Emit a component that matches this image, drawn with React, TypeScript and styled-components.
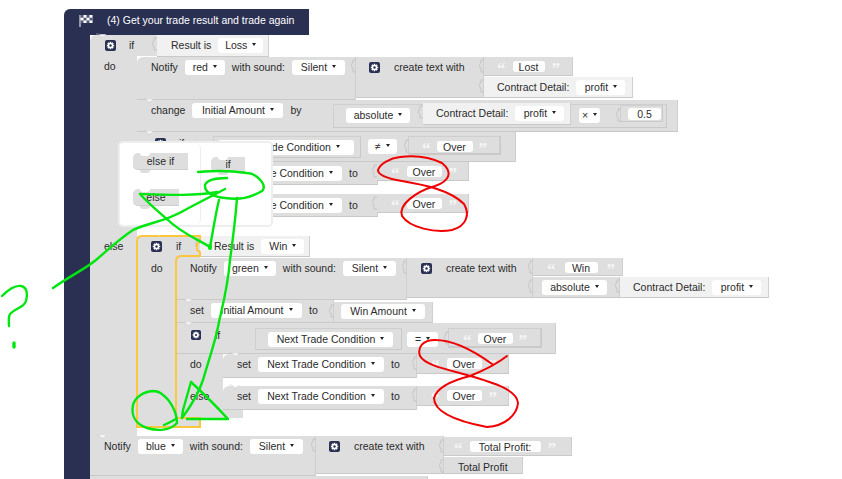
import React from 'react'
import styled, { createGlobalStyle } from 'styled-components'

const GlobalStyle = createGlobalStyle`
  html, body {
    margin: 0;
    padding: 0;
    background: #fff;
    overflow: hidden;
  }
`

const Workspace = styled.div`
  position: relative;
  width: 842px;
  height: 479px;
  overflow: hidden;
  background: #fff;
  font-family: 'Liberation Sans', Arial, sans-serif;
  font-size: 10.5px;
  color: #2b2b2b;
`

type Tone = 'grey' | 'light' | 'navy'

interface BlockProps {
  $x: number
  $y: number
  $w: number
  $h: number
  $tone?: Tone
  $pad?: number
  $top?: number
  $round?: boolean
  $flat?: boolean
}

const toneColors: Record<Tone, string> = { grey: '#dedede', light: '#f1f1f1', navy: '#2a3052' }

const Block = styled.div<BlockProps>`
  position: absolute;
  left: ${(p) => p.$x}px;
  top: ${(p) => p.$y}px;
  width: ${(p) => p.$w}px;
  height: ${(p) => p.$h}px;
  box-sizing: border-box;
  padding: ${(p) => p.$top ?? 3}px 0 0 ${(p) => p.$pad ?? 14}px;
  background: ${(p) => toneColors[p.$tone ?? 'grey']};
  border-bottom: ${(p) => (p.$flat || p.$tone === 'navy' ? 'none' : '1px solid #c9c9c9')};
  border-right: ${(p) => (p.$flat || p.$tone === 'navy' ? 'none' : '1px solid #cfcfcf')};
  border-top-left-radius: ${(p) => (p.$round ? 6 : 0)}px;
  display: flex;
  align-items: flex-start;
`

const Row = styled.div<{ $gap?: number; $h?: number }>`
  display: flex;
  align-items: center;
  height: ${(p) => p.$h ?? 15}px;
  gap: ${(p) => p.$gap ?? 7}px;
  white-space: nowrap;
`

const Label = styled.span<{ $color?: string }>`
  display: inline-block;
  margin-bottom: 2px;
  color: ${(p) => p.$color ?? 'inherit'};
`

const Field = styled.span<{ $w: number; $h?: number }>`
  display: inline-flex;
  align-items: center;
  justify-content: center;
  gap: 5px;
  box-sizing: border-box;
  width: ${(p) => p.$w}px;
  height: ${(p) => p.$h ?? 15}px;
  padding-bottom: ${(p) => (p.$h ? 0 : 2)}px;
  flex: none;
  background: #fff;
  border-radius: 3px;
  font-size: 10.5px;
`

const Caret = styled.span`
  width: 0;
  height: 0;
  border-left: 2.5px solid transparent;
  border-right: 2.5px solid transparent;
  border-top: 3px solid #222;
`

const Quote = styled.span`
  font-family: 'Liberation Serif', serif;
  font-size: 17px;
  line-height: 15px;
  height: 11px;
  color: #f6f6f6;
  font-weight: bold;
`

const TabMark = styled.svg`
  position: absolute;
  left: -5px;
  top: 3px;
  overflow: visible;
`

const Notch = styled.svg`
  position: absolute;
  left: 6px;
  top: -1px;
  overflow: visible;
`

const Frame = styled.div<{ $x: number; $y: number; $w: number; $h: number }>`
  position: absolute;
  left: ${(p) => p.$x}px;
  top: ${(p) => p.$y}px;
  width: ${(p) => p.$w}px;
  height: ${(p) => p.$h}px;
  box-sizing: border-box;
  border: 1px solid #c9c9c9;
  border-left-color: #cfcfcf;
  border-top-color: #cfcfcf;
`

const Popup = styled.div`
  position: absolute;
  left: 118px;
  top: 141px;
  width: 155px;
  height: 86px;
  box-sizing: border-box;
  display: grid;
  grid-template-columns: 81px 1fr;
  background: #fff;
  border: 2px solid #eeeeee;
  border-radius: 5px;
`

const PopupTail = styled.svg`
  position: absolute;
  left: 155px;
  top: 225px;
`

const Flyout = styled.div`
  border-right: 1px solid #eeeeee;
  border-radius: 0 6px 6px 0;
  padding: 10px 0 0 13px;
  display: flex;
  flex-direction: column;
  align-items: flex-start;
  gap: 19px;
`

const Palette = styled.div`
  padding: 14px 0 0 10px;
`

const MiniBlock = styled.div<{ $w: number; $h: number }>`
  position: relative;
  width: ${(p) => p.$w}px;
  height: ${(p) => p.$h}px;
  box-sizing: border-box;
  background: #dedede;
  border-bottom: 1px solid #cfcfcf;
  border-radius: 5px 0 0 5px;
  display: flex;
  align-items: center;
  justify-content: center;
  font-size: 10.5px;

  &::before {
    content: '';
    position: absolute;
    left: 7px;
    top: 0;
    width: 10px;
    height: 3px;
    background: #fff;
    border-radius: 0 0 4px 4px;
  }

  &::after {
    content: '';
    position: absolute;
    left: 7px;
    bottom: -4px;
    width: 10px;
    height: 3px;
    background: #dedede;
    border-radius: 0 0 4px 4px;
  }
`

const Overlay = styled.svg`
  position: absolute;
  left: 0;
  top: 0;
  pointer-events: none;
`

function Dropdown({ w, children }: { w: number; children: React.ReactNode }) {
  return (
    <Field $w={w}>
      {children}
      <Caret />
    </Field>
  )
}

function Gear({ size = 11 }: { size?: number }) {
  const teeth = [0, 45, 90, 135]
  return (
    <svg width={size} height={size} viewBox="0 0 11 11" style={{ flex: 'none', marginBottom: 1 }}>
      <rect width="11" height="11" rx="2" fill="#2a3052" />
      {teeth.map((a) => (
        <rect key={a} x="4.7" y="1.8" width="1.6" height="7.4" fill="#fff" transform={`rotate(${a} 5.5 5.5)`} />
      ))}
      <circle cx="5.5" cy="5.5" r="2.7" fill="#fff" />
      <circle cx="5.5" cy="5.5" r="1.2" fill="#2a3052" />
    </svg>
  )
}

function Flag() {
  return (
    <svg width="14" height="13" viewBox="0 0 14 13" style={{ flex: 'none' }}>
      <rect x="0.5" y="1" width="1" height="12" fill="#fff" />
      <rect x="1.5" y="1" width="12" height="8" fill="#fff" />
      {[0, 1, 2, 3].map((c) =>
        [0, 1, 2].map((r) =>
          (c + r) % 2 === 0 ? <rect key={`${c}${r}`} x={1.5 + c * 3} y={1 + r * 2.7} width="3" height="2.7" fill="#555a78" /> : null,
        ),
      )}
    </svg>
  )
}

function Tab() {
  return (
    <TabMark width="6" height="14">
      <path d="M5 0 H2 V3 C0 3 0 8 2 8 V12 H5" fill="none" stroke="#c4c4c4" strokeWidth="1" />
    </TabMark>
  )
}

function StatementNotch() {
  return (
    <Notch width="12" height="4">
      <path d="M0 0 L3 0 L5 3 L8 3 L10 0" fill="#fff" stroke="#cfcfcf" strokeWidth="0.8" opacity="0.7" />
    </Notch>
  )
}

function TextBlock({
  x,
  y,
  w,
  h,
  pad,
  fieldW,
  gap = 7,
  text,
}: {
  x: number
  y: number
  w: number
  h: number
  pad: number
  fieldW: number
  gap?: number
  text: string
}) {
  return (
    <Block $x={x} $y={y} $w={w} $h={h} $pad={pad} $top={4}>
      <Tab />
      <Row $gap={gap} $h={11}>
        <Quote>“</Quote>
        <Field $w={fieldW} $h={11}>
          {text}
        </Field>
        <Quote>”</Quote>
      </Row>
    </Block>
  )
}

const green = '#00e610'
const red = '#f00000'

const greenStrokes = [
  'M2 296 C7 291 14 285 21 286 C27 287 28 294 26 301 C24 308 15 308 10 314 C8 318 9 322 9 326',
  'M53 288 C70 276 85 269 96 260 C110 248 118 240 133 230 C150 222 165 222 185 210 C200 202 212 196 225 189',
  'M227 178 C215 178 207 180 205 185 C204 193 215 197 225 198 C240 200 250 198 262 191 C268 185 256 173 247 173 C225 170 212 171 198 172',
  'M140 194 C170 195 195 196 217 192',
  'M140 194 C150 205 160 213 168 220 C180 232 195 238 210 247',
  'M210 247 C214 225 216 212 219 200',
  'M237 198 C235 225 232 245 230 260 C228 285 224 300 219 322 C216 340 208 362 203 380 C198 395 188 410 182 418',
  'M191 382 L183 410 L182 417',
  'M191 382 C205 395 218 408 228 419 L187 419',
  'M153 391 C142 392 135 398 133 405 C131 415 135 424 147 428 C157 431 170 431 177 423 C177 412 170 400 163 395 C160 392 156 391 153 391',
  'M164 425 C169 423 172 421 176 419',
]

const redStrokes = [
  'M400 157 C390 158 380 164 378 170 C378 176 390 179 402 181 C425 185 450 190 464 204 C470 214 467 226 452 230 C435 233 410 228 402 216 C398 205 415 192 435 186 C450 181 453 172 442 163 C430 157 415 155 400 157',
  'M507 356 C498 363 485 370 470 376 C450 381 437 388 434 398 C434 410 450 420 487 427 C505 426 517 415 518 403 C517 390 495 383 467 375 C445 369 425 365 420 356 C417 347 423 340 435 340 C450 340 470 348 492 364',
]

export default function App() {
  return (
    <Workspace>
      <GlobalStyle />

      <Block $x={64} $y={9} $w={245} $h={26} $tone="navy" $pad={15} $top={4} $round>
        <Row $gap={14}>
          <Flag />
          <Label $color="#fff">(4) Get your trade result and trade again</Label>
        </Row>
      </Block>
      <Block $x={64} $y={35} $w={26} $h={444} $tone="navy" />

      {/* outer if / do / else */}
      <Block $x={90} $y={35} $w={67} $h={21} $pad={15} $round $flat>
        <StatementNotch />
        <Row $gap={13}>
          <Gear />
          <Label>if</Label>
        </Row>
      </Block>
      <Block $x={157} $y={35} $w={112} $h={22} $tone="light">
        <Tab />
        <Row>
          <Label>Result is</Label>
          <Dropdown w={45}>Loss</Dropdown>
        </Row>
      </Block>
      <Block $x={90} $y={56} $w={47} $h={180} $flat>
        <Row>
          <Label>do</Label>
        </Row>
      </Block>
      <Block $x={90} $y={236} $w={47} $h={200} $flat>
        <Row>
          <Label>else</Label>
        </Row>
      </Block>

      <Block $x={137} $y={57} $w={219} $h={43} $round>
        <Row>
          <Label>Notify</Label>
          <Dropdown w={40}>red</Dropdown>
          <Label>with sound:</Label>
          <Dropdown w={53}>Silent</Dropdown>
        </Row>
      </Block>
      <Block $x={356} $y={57} $w={128} $h={41} $pad={13}>
        <Tab />
        <Row $gap={14}>
          <Gear />
          <Label>create text with</Label>
        </Row>
      </Block>
      <TextBlock x={484} y={57} w={89} h={19} pad={13} fieldW={32} text="Lost" gap={7} />
      <Block $x={484} $y={77} $w={149} $h={21} $tone="light" $pad={13}>
        <Tab />
        <Row>
          <Label>Contract Detail:</Label>
          <Dropdown w={49}>profit</Dropdown>
        </Row>
      </Block>

      <Block $x={137} $y={100} $w={541} $h={32}>
        <StatementNotch />
        <Row>
          <Label>change</Label>
          <Dropdown w={91}>Initial Amount</Dropdown>
          <Label>by</Label>
        </Row>
      </Block>
      <Frame $x={333} $y={104} $w={334} $h={24} />
      <Block $x={340} $y={105} $w={83} $h={20} $pad={6} $flat>
        <Dropdown w={64}>absolute</Dropdown>
      </Block>
      <Block $x={423} $y={103} $w={148} $h={22} $tone="light" $pad={13}>
        <Tab />
        <Row>
          <Label>Contract Detail:</Label>
          <Dropdown w={49}>profit</Dropdown>
        </Row>
      </Block>
      <Block $x={571} $y={105} $w={45} $h={20} $pad={8} $flat>
        <Dropdown w={21}>×</Dropdown>
      </Block>
      <Frame $x={620} $y={105} $w={43} $h={17} />
      <Block $x={621} $y={106} $w={41} $h={15} $pad={7} $top={2} $flat>
        <Tab />
        <Field $w={33} $h={12}>
          0.5
        </Field>
      </Block>

      {/* if behind the popup */}
      <Block $x={137} $y={132} $w={379} $h={30} $pad={18} $top={4}>
        <StatementNotch />
        <Row $gap={13}>
          <Gear />
          <Label>if</Label>
        </Row>
      </Block>
      <Frame $x={213} $y={136} $w={148} $h={22} />
      <Block $x={214} $y={137} $w={146} $h={20} $pad={4} $flat>
        <Dropdown w={136}>Next Trade Condition</Dropdown>
      </Block>
      <Block $x={362} $y={136} $w={40} $h={20} $pad={6} $flat>
        <Dropdown w={29}>≠</Dropdown>
      </Block>
      <Frame $x={408} $y={136} $w={93} $h={19} />
      <TextBlock x={409} y={137} w={91} h={17} pad={13} fieldW={36} text="Over" gap={6} />
      <Block $x={137} $y={162} $w={241} $h={23} $pad={79} $top={4}>
        <Row>
          <Dropdown w={126}>Next Trade Condition</Dropdown>
          <Label>to</Label>
        </Row>
      </Block>
      <TextBlock x={377} y={162} w={92} h={19} pad={14} fieldW={35} text="Over" gap={7} />
      <Block $x={137} $y={194} $w={241} $h={23} $pad={79} $top={4}>
        <Row>
          <Dropdown w={126}>Next Trade Condition</Dropdown>
          <Label>to</Label>
        </Row>
      </Block>
      <TextBlock x={377} y={194} w={92} h={19} pad={14} fieldW={35} text="Over" gap={7} />

      {/* selected if */}
      <Block $x={137} $y={236} $w={63} $h={191} $pad={14} $round $flat>
        <Row $gap={14}>
          <Gear />
          <Label>if</Label>
        </Row>
      </Block>
      <Block $x={200} $y={236} $w={110} $h={21} $tone="light">
        <Tab />
        <Row>
          <Label>Result is</Label>
          <Dropdown w={43}>Win</Dropdown>
        </Row>
      </Block>
      <Block $x={137} $y={258} $w={39} $h={30} $pad={14} $flat>
        <Row>
          <Label>do</Label>
        </Row>
      </Block>

      <Block $x={176} $y={258} $w={231} $h={42} $round>
        <Row>
          <Label>Notify</Label>
          <Dropdown w={52}>green</Dropdown>
          <Label>with sound:</Label>
          <Dropdown w={53}>Silent</Dropdown>
        </Row>
      </Block>
      <Block $x={407} $y={258} $w={126} $h={40}>
        <Tab />
        <Row $gap={14}>
          <Gear />
          <Label>create text with</Label>
        </Row>
      </Block>
      <TextBlock x={533} y={258} w={90} h={18} pad={14} fieldW={33} text="Win" gap={9} />
      <Block $x={533} $y={277} $w={87} $h={21} $pad={9}>
        <Tab />
        <Dropdown w={65}>absolute</Dropdown>
      </Block>
      <Block $x={620} $y={277} $w={149} $h={21} $tone="light" $pad={13}>
        <Tab />
        <Row>
          <Label>Contract Detail:</Label>
          <Dropdown w={49}>profit</Dropdown>
        </Row>
      </Block>

      <Block $x={176} $y={300} $w={158} $h={23}>
        <StatementNotch />
        <Row>
          <Label>set</Label>
          <Dropdown w={91}>Initial Amount</Dropdown>
          <Label>to</Label>
        </Row>
      </Block>
      <Block $x={334} $y={302} $w={99} $h={21} $pad={7} $top={2}>
        <Tab />
        <Dropdown w={84}>Win Amount</Dropdown>
      </Block>

      <Block $x={176} $y={323} $w={380} $h={31} $pad={15} $top={5}>
        <StatementNotch />
        <Row $gap={14}>
          <Gear size={10} />
          <Label>if</Label>
        </Row>
      </Block>
      <Frame $x={255} $y={328} $w={147} $h={22} />
      <Block $x={256} $y={329} $w={145} $h={20} $pad={12} $flat>
        <Dropdown w={125}>Next Trade Condition</Dropdown>
      </Block>
      <Block $x={402} $y={329} $w={42} $h={20} $pad={5} $flat>
        <Dropdown w={31}>=</Dropdown>
      </Block>
      <Frame $x={448} $y={328} $w={94} $h={20} />
      <TextBlock x={449} y={329} w={92} h={18} pad={14} fieldW={35} text="Over" gap={6} />

      <Block $x={176} $y={354} $w={47} $h={32} $flat>
        <Row>
          <Label>do</Label>
        </Row>
      </Block>
      <Block $x={176} $y={386} $w={47} $h={32} $flat>
        <Row>
          <Label>else</Label>
        </Row>
      </Block>
      <Block $x={223} $y={354} $w={194} $h={24} $round>
        <StatementNotch />
        <Row>
          <Label>set</Label>
          <Dropdown w={126}>Next Trade Condition</Dropdown>
          <Label>to</Label>
        </Row>
      </Block>
      <TextBlock x={417} y={354} w={92} h={20} pad={14} fieldW={35} text="Over" gap={7} />
      <Block $x={223} $y={386} $w={194} $h={24} $round>
        <StatementNotch />
        <Row>
          <Label>set</Label>
          <Dropdown w={126}>Next Trade Condition</Dropdown>
          <Label>to</Label>
        </Row>
      </Block>
      <TextBlock x={417} y={386} w={92} h={20} pad={14} fieldW={35} text="Over" gap={7} />
      <Block $x={223} $y={410} $w={20} $h={8} $flat />

      {/* bottom notify */}
      <Block $x={90} $y={436} $w={226} $h={40}>
        <StatementNotch />
        <Row>
          <Label>Notify</Label>
          <Dropdown w={45}>blue</Dropdown>
          <Label>with sound:</Label>
          <Dropdown w={53}>Silent</Dropdown>
        </Row>
      </Block>
      <Block $x={316} $y={436} $w={128} $h={38} $pad={13}>
        <Tab />
        <Row $gap={14}>
          <Gear />
          <Label>create text with</Label>
        </Row>
      </Block>
      <TextBlock x={444} y={437} w={128} h={19} pad={10} fieldW={71} text="Total Profit:" gap={7} />
      <Block $x={444} $y={457} $w={79} $h={17}>
        <Tab />
        <Row>
          <Label>Total Profit</Label>
        </Row>
      </Block>
      <Block $x={90} $y={476} $w={338} $h={3} />

      <Overlay width="842" height="479" viewBox="0 0 842 479">
        <path
          d="M137 241 Q137 236 142 236 L200 236 L200 242 L197 244 L197 250 L200 252 L200 256 L181 256 Q176 256 176 262 L176 418 L200 418 L200 427 L137 427 Z"
          fill="none"
          stroke="#fcc63d"
          strokeWidth="2"
        />
      </Overlay>

      <PopupTail width="20" height="12" viewBox="0 0 20 12">
        <path d="M2 0 L16 0 L4 11 Z" fill="#fff" />
      </PopupTail>
      <Popup>
        <Flyout>
          <MiniBlock $w={55} $h={17}>else if</MiniBlock>
          <MiniBlock $w={46} $h={17}>else</MiniBlock>
        </Flyout>
        <Palette>
          <MiniBlock $w={34} $h={15}>if</MiniBlock>
        </Palette>
      </Popup>

      <Overlay width="842" height="479" viewBox="0 0 842 479">
        <g fill="none" stroke={green} strokeWidth="2.4" strokeLinecap="round" strokeLinejoin="round">
          {greenStrokes.map((d) => (
            <path key={d} d={d} />
          ))}
          <path d="M14 343 L14 347" strokeWidth="3.4" />
          <path d="M210 246 L210 248" strokeWidth="4" />
        </g>
        <g fill="none" stroke={red} strokeWidth="2" strokeLinecap="round" strokeLinejoin="round">
          {redStrokes.map((d) => (
            <path key={d} d={d} />
          ))}
        </g>
      </Overlay>
    </Workspace>
  )
}
